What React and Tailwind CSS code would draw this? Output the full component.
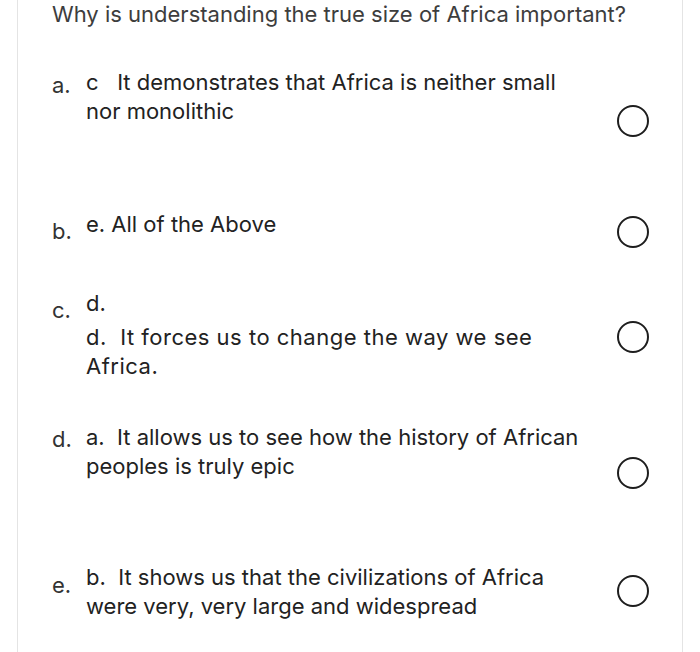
const options = [
  { label: 'a.', mt: 'mt-[40px]', labelPt: 'pt-[3px]', circlePt: 'pt-[37px]', lines: [['c\u00a0\u00a0\u00a0It demonstrates that Africa is neither small', 'nor monolithic']] },
  { label: 'b.', mt: 'mt-[73px]', labelPt: 'pt-[7px]', circlePt: 'pt-[6px]', lines: [['e. All of the Above']] },
  { label: 'c.', mt: 'mt-[41px]', labelPt: 'pt-[7px]', circlePt: 'pt-[32px]', lines: [['d.'], ['d.\u00a0\u00a0It forces us to change the way we see', 'Africa.']] },
  { label: 'd.', mt: 'mt-[42px]', labelPt: 'pt-[2px]', circlePt: 'pt-[34px]', lines: [['a.\u00a0\u00a0It allows us to see how the history of African', 'peoples is truly epic']] },
  { label: 'e.', mt: 'mt-[74px]', labelPt: 'pt-[8px]', circlePt: 'pt-[12px]', lines: [['b.\u00a0\u00a0It shows us that the civilizations of Africa', 'were very, very large and widespread']] },
];

export default function App() {
  return (
    <div className="h-[652px] overflow-hidden bg-white" style={{ fontFamily: 'Inter, "Liberation Sans", sans-serif' }}>
      <div className="mx-[17px] h-full border-x border-[#e4e4e4] pl-[34px] pr-[33px]">
        <h1 className="text-[22px] leading-[28px] text-[#3d3d3d] whitespace-nowrap">Why is understanding the true size of Africa important?</h1>
        {options.map((opt) => (
          <div key={opt.label} className={`flex items-start ${opt.mt}`}>
            <span className={`w-[34px] shrink-0 text-[22px] leading-[29px] text-[#333] ${opt.labelPt}`}>{opt.label}</span>
            <div className="flex-1 text-[22px] leading-[29px] text-[#222]">
              {opt.lines.map((para, i) => (
                <p key={i} className={i > 0 ? 'mt-[5px] tracking-[0.5px]' : ''}>
                  {para.map((line, j) => (
                    <span key={j} className="block whitespace-nowrap">{line}</span>
                  ))}
                </p>
              ))}
            </div>
            <div className={`shrink-0 ${opt.circlePt}`}>
              <div className="w-[32px] h-[32px] rounded-full border-2 border-[#1e1e1e]" />
            </div>
          </div>
        ))}
      </div>
    </div>
  );
}
